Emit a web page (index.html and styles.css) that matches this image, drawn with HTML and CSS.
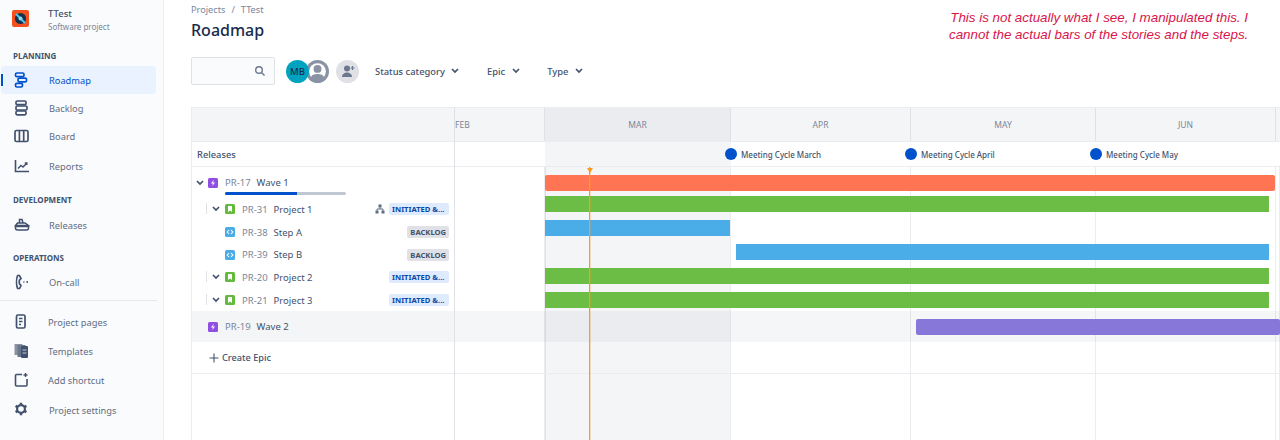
FILE: index.html
```html
<!DOCTYPE html>
<html lang="en">
<head>
<meta charset="utf-8">
<title>Roadmap</title>
<link rel="stylesheet" href="styles.css">
</head>
<body>
<div class="app">
  <aside class="sidebar">
    <div class="project">
      <svg class="avatar" width="17" height="17" viewBox="0 0 17 17"><rect width="17" height="17" rx="2" fill="#f4511e"/><circle cx="8.5" cy="8.5" r="5.6" fill="#17324d"/><path d="M4 4l9 9" stroke="#4fc3e8" stroke-width="2"/><circle cx="8.5" cy="8.5" r="2" fill="#8fd8f0"/></svg>
      <div class="project-text"><div class="project-name">TTest</div><div class="project-type">Software project</div></div>
    </div>
    <div class="nav-head head-planning">PLANNING</div>
    <a class="nav-item active h-28"><span class="marker"></span>
      <svg class="ic" width="16" height="16" viewBox="0 0 16 16" fill="none" stroke="currentColor" stroke-width="1.7"><rect x="1.5" y="1" width="8.5" height="3.6" rx="1.4"/><rect x="4" y="6.2" width="8.5" height="3.6" rx="1.4"/><rect x="1.5" y="11.4" width="7" height="3.6" rx="1.4"/></svg>
      <span>Roadmap</span></a>
    <a class="nav-item h-28">
      <svg class="ic" width="16" height="16" viewBox="0 0 16 16" fill="none" stroke="currentColor" stroke-width="1.7"><rect x="2" y="1" width="10" height="3.6" rx="1.2"/><rect x="2" y="6" width="11" height="4" rx="1.2"/><rect x="2" y="11" width="10" height="3.8" rx="1.2"/></svg>
      <span>Backlog</span></a>
    <a class="nav-item h-28">
      <svg class="ic" width="16" height="16" viewBox="0 0 16 16" fill="none" stroke="currentColor" stroke-width="1.7"><rect x="1" y="2.5" width="13" height="11" rx="1.5"/><path d="M5.4 2.5v11M9.7 2.5v11"/></svg>
      <span>Board</span></a>
    <a class="nav-item h-30 reports">
      <svg class="ic" width="16" height="16" viewBox="0 0 16 16" fill="none" stroke="currentColor" stroke-width="1.6"><path d="M1.5 2v11.5h13.5"/><path d="M4 10.5l3-3 2 1.5 3.5-3.5M10.8 5h2v2" stroke-width="1.5"/></svg>
      <span>Reports</span></a>
    <div class="nav-head head-dev">DEVELOPMENT</div>
    <a class="nav-item h-30">
      <svg class="ic" width="16" height="16" viewBox="0 0 16 16" fill="none" stroke="currentColor" stroke-width="1.5"><path d="M5.5 6V2.5h2.5l1 3.5M3.5 6h7.5l3.5 2.5H1.5z"/><path d="M1.5 9.5h13v1.5a2 2 0 0 1-2 2h-9a2 2 0 0 1-2-2z"/></svg>
      <span>Releases</span></a>
    <div class="nav-head head-ops">OPERATIONS</div>
    <a class="nav-item h-30">
      <svg class="ic" width="16" height="16" viewBox="0 0 16 16" fill="none" stroke="currentColor" stroke-width="1.7"><path d="M5.500 1.500H3.600C2.200 5 2.200 11 3.600 14.500h2L7 11.500 5.400 9.800a9 9 0 0 1 0-3.600L7 4.500z"/><path d="M9.500 8h.8M12.500 8h1.400" stroke-width="2"/></svg>
      <span>On-call</span></a>
    <div class="nav-sep"></div>
    <a class="nav-item h-30 low">
      <svg class="ic" width="16" height="16" viewBox="0 0 16 16" fill="none" stroke="currentColor" stroke-width="1.7"><rect x="2.500" y="1" width="8.500" height="13" rx="1.400"/><path d="M5 4.500h3.500M5 7.500h3.500M5 10.500h2"/></svg>
      <span>Project pages</span></a>
    <a class="nav-item h-28 low">
      <svg class="ic" width="16" height="16" viewBox="0 0 16 16"><rect x="0.500" y="1" width="8" height="11" fill="#8993a4"/><rect x="3.500" y="2" width="8" height="12" fill="#6b778c"/><rect x="7" y="3" width="7" height="12" rx="1" fill="#42526e"/><path d="M8.500 7h4M8.500 10h4" stroke="#c1c7d0"/></svg>
      <span>Templates</span></a>
    <a class="nav-item h-28 low shortcut">
      <svg class="ic" width="16" height="16" viewBox="0 0 16 16" fill="none" stroke="currentColor" stroke-width="1.600"><path d="M8 2.500H2.500a1 1 0 0 0-1 1v9.500a1 1 0 0 0 1 1h9.500a1 1 0 0 0 1-1V7"/><path d="M11.500 1v4M9.500 3h4" stroke-width="1.400"/></svg>
      <span>Add shortcut</span></a>
    <a class="nav-item h-30 low settings">
      <svg class="ic" width="16" height="16" viewBox="0 0 16 16" fill="none" stroke="currentColor"><circle cx="7" cy="7" r="3.900" stroke-width="2.200"/><path d="M7 .8v2M7 11.200v2M1.600 3.900l1.700 1M10.700 9.100l1.700 1M1.600 10.100l1.700-1M10.700 4.900l1.700-1" stroke-width="2.400"/></svg>
      <span>Project settings</span></a>
  </aside>

  <main class="main">
    <div class="crumbs"><span>Projects</span><span class="slash">/</span><span>TTest</span></div>
    <h1 class="title">Roadmap</h1>
    <p class="note">This is not actually what I see, I manipulated this. I<br>cannot the actual bars of the stories and the steps.</p>

    <div class="toolbar">
      <div class="search"><svg width="12" height="12" viewBox="0 0 12 12" fill="none" stroke="#6b778c" stroke-width="1.400"><circle cx="5" cy="5" r="3.300"/><path d="M7.500 7.500l3 3"/></svg></div>
      <div class="people">
        <span class="person mb">MB</span>
        <span class="person ghost"><svg width="23" height="23" viewBox="0 0 22 22"><circle cx="11" cy="11" r="11" fill="#8993a4"/><circle cx="11" cy="11" r="8" fill="#fff"/><circle cx="11" cy="8.500" r="3.800" fill="#8993a4"/><path d="M5 16.500c0-4 12-4 12 0v3H5z" fill="#8993a4"/></svg></span>
        <span class="person add"><svg width="14" height="14" viewBox="0 0 14 14" fill="#6b778c"><circle cx="6" cy="4.500" r="3"/><path d="M1 13c0-6 10-6 10 0z"/><path d="M11.500 2v4M9.500 4h4" stroke="#6b778c" stroke-width="1.200"/></svg></span>
      </div>
      <button class="filter f-status">Status category<svg class="chev" width="8" height="6" viewBox="0 0 8 6"><path d="M1 1l3 3 3-3" fill="none" stroke="#42526e" stroke-width="1.700"/></svg></button>
      <button class="filter f-epic">Epic<svg class="chev" width="8" height="6" viewBox="0 0 8 6"><path d="M1 1l3 3 3-3" fill="none" stroke="#42526e" stroke-width="1.700"/></svg></button>
      <button class="filter f-type">Type<svg class="chev" width="8" height="6" viewBox="0 0 8 6"><path d="M1 1l3 3 3-3" fill="none" stroke="#42526e" stroke-width="1.700"/></svg></button>
    </div>

    <section class="timeline">
      <div class="left">
        <div class="left-head"></div>
        <div class="left-releases">Releases</div>
        <div class="row epic-open">
          <svg class="tw" width="8" height="6" viewBox="0 0 8 6"><path d="M1 1l3 3 3-3" fill="none" stroke="#42526e" stroke-width="1.700"/></svg>
          <svg class="type" width="10" height="10" viewBox="0 0 10 10"><rect width="10" height="10" rx="1.500" fill="#904ee2"/><path d="M5.700 1.800L3 5.500h2l-.7 2.700L7 4.500H5z" fill="#fff"/></svg>
          <span class="key">PR-17</span><span class="name">Wave 1</span>
          <div class="progress"><div class="progress-done"></div></div>
        </div>
        <div class="row child first">
          <span class="tick"></span><svg class="tw" width="8" height="6" viewBox="0 0 8 6"><path d="M1 1l3 3 3-3" fill="none" stroke="#42526e" stroke-width="1.700"/></svg>
          <svg class="type" width="10" height="10" viewBox="0 0 10 10"><rect width="10" height="10" rx="1.500" fill="#63ba3c"/><path d="M3 2h4v6L5 6.500 3 8z" fill="#fff"/></svg>
          <span class="key">PR-31</span><span class="name">Project 1</span>
          <svg class="tree" width="10" height="10" viewBox="0 0 10 10" fill="#5e6c84"><rect x="3.500" y="0.500" width="3" height="3"/><rect x="0.500" y="6.500" width="3" height="3"/><rect x="6.500" y="6.500" width="3" height="3"/><path d="M5 3.500V5M2 6.500V5h6v1.500" fill="none" stroke="#5e6c84"/></svg>
          <span class="lozenge blue">INITIATED &amp;...</span>
        </div>
        <div class="row leaf">
          <svg class="type" width="10" height="10" viewBox="0 0 10 10"><rect width="10" height="10" rx="1.500" fill="#4bade8"/><path d="M4 3L2.200 5 4 7M6 3l1.800 2L6 7" fill="none" stroke="#fff" stroke-width="1.100"/></svg>
          <span class="key">PR-38</span><span class="name">Step A</span>
          <span class="lozenge grey">BACKLOG</span>
        </div>
        <div class="row leaf">
          <svg class="type" width="10" height="10" viewBox="0 0 10 10"><rect width="10" height="10" rx="1.500" fill="#4bade8"/><path d="M4 3L2.200 5 4 7M6 3l1.800 2L6 7" fill="none" stroke="#fff" stroke-width="1.100"/></svg>
          <span class="key">PR-39</span><span class="name">Step B</span>
          <span class="lozenge grey">BACKLOG</span>
        </div>
        <div class="row child">
          <span class="tick"></span><svg class="tw" width="8" height="6" viewBox="0 0 8 6"><path d="M1 1l3 3 3-3" fill="none" stroke="#42526e" stroke-width="1.700"/></svg>
          <svg class="type" width="10" height="10" viewBox="0 0 10 10"><rect width="10" height="10" rx="1.500" fill="#63ba3c"/><path d="M3 2h4v6L5 6.500 3 8z" fill="#fff"/></svg>
          <span class="key">PR-20</span><span class="name">Project 2</span>
          <span class="lozenge blue">INITIATED &amp;...</span>
        </div>
        <div class="row child">
          <span class="tick"></span><svg class="tw" width="8" height="6" viewBox="0 0 8 6"><path d="M1 1l3 3 3-3" fill="none" stroke="#42526e" stroke-width="1.700"/></svg>
          <svg class="type" width="10" height="10" viewBox="0 0 10 10"><rect width="10" height="10" rx="1.500" fill="#63ba3c"/><path d="M3 2h4v6L5 6.500 3 8z" fill="#fff"/></svg>
          <span class="key">PR-21</span><span class="name">Project 3</span>
          <span class="lozenge blue">INITIATED &amp;...</span>
        </div>
        <div class="row epic-closed">
          <svg class="type" width="10" height="10" viewBox="0 0 10 10"><rect width="10" height="10" rx="1.500" fill="#904ee2"/><path d="M5.700 1.800L3 5.500h2l-.7 2.700L7 4.500H5z" fill="#fff"/></svg>
          <span class="key">PR-19</span><span class="name">Wave 2</span>
        </div>
        <div class="row create"><svg width="10" height="10" viewBox="0 0 10 10"><path d="M5 .5v9M.5 5h9" stroke="#42526e" stroke-width="1.100"/></svg><span>Create Epic</span></div>
      </div>

      <div class="chart">
        <div class="months">
          <div class="month w-feb feb">FEB</div>
          <div class="month w-mar current">MAR</div>
          <div class="month w-apr">APR</div>
          <div class="month w-may">MAY</div>
          <div class="month w-jun">JUN</div>
          <div class="month w-rest"></div>
        </div>
        <div class="releases">
          <div class="rel w-rel1"></div>
          <div class="rel w-rel2"><i class="dot"></i>Meeting Cycle March</div>
          <div class="rel w-rel3"><i class="dot"></i>Meeting Cycle April</div>
          <div class="rel w-rel4"><i class="dot"></i>Meeting Cycle May</div>
        </div>
        <div class="canvas">
          <div class="columns">
            <div class="col w-feb"></div><div class="col w-mar tint"></div><div class="col w-apr"></div><div class="col w-may"></div><div class="col w-jun"></div><div class="col w-rest"></div>
          </div>
          <div class="today"></div>
          <div class="bars">
            <div class="band b-first"><div class="bar orange" style="margin-left:90px;width:730px"></div></div>
            <div class="band"><div class="bar green" style="margin-left:90px;width:724px"></div></div>
            <div class="band"><div class="bar sky" style="margin-left:90px;width:185px"></div></div>
            <div class="band"><div class="bar sky" style="margin-left:281px;width:533px"></div></div>
            <div class="band"><div class="bar green" style="margin-left:90px;width:724px"></div></div>
            <div class="band"><div class="bar green" style="margin-left:90px;width:724px"></div></div>
            <div class="band grey-band"><div class="bar purple" style="margin-left:461px;width:364px"></div></div>
            <div class="band last-band"></div>
          </div>
        </div>
      </div>
    </section>
  </main>
</div>
</body>
</html>
```

FILE: styles.css
```css
* { box-sizing: border-box; }
html, body { margin: 0; padding: 0; }
body { width: 1280px; height: 440px; overflow: hidden; background: #fff; font-family: "Noto Sans", sans-serif; color: #172b4d; }
.app { display: flex; height: 440px; }

.sidebar { width: 164px; flex: none; background: #fafbfc; border-right: 1px solid #ebecf0; padding-top: 9px; color: #42526e; }
.project { display: flex; padding-left: 12px; height: 25px; }
.avatar { margin-top: 1px; }
.project-text { margin-left: 19px; }
.project-name { font-size: 9.5px; line-height: 13px; font-weight: 500; color: #42526e; margin-top: -2px; }
.project-type { font-size: 8px; line-height: 12px; color: #7a869a; margin-top: 1px; }
.nav-head { font-size: 8px; line-height: 12px; font-weight: 700; color: #42526e; padding-left: 13px; }
.head-planning { margin-top: 16px; margin-bottom: 4px; }
.head-dev { margin-top: 13px; margin-bottom: 4px; }
.head-ops { margin-top: 12px; margin-bottom: 3px; }
.nav-item { position: relative; display: flex; align-items: center; margin-left: 1px; width: 155px; padding-left: 13px; font-size: 9.3px; color: #5e6c84; border-radius: 3px; }
.nav-item .ic { flex: none; color: #42526e; margin-right: 19px; }
.h-28 { height: 28px; }
.h-30 { height: 30px; }
.reports { margin-top: 1px; }
.active { background: #e9f2fe; color: #0052cc; }
.active .ic { color: #0052cc; }
.marker { position: absolute; left: 0; top: 8px; width: 2px; height: 12px; background: #0052cc; }
.nav-sep { height: 1px; background: #e6e8ec; width: 157px; margin-top: 3px; margin-bottom: 6px; }
.low .ic { margin-right: 18px; }
.shortcut { margin-top: 1px; }
.settings { margin-top: 1px; }
.settings .ic { margin-right: 19px; }

.main { flex: 1; min-width: 0; padding-left: 27px; position: relative; }
.crumbs { display: flex; gap: 6px; font-size: 9.2px; line-height: 13px; color: #7a869a; margin-top: 3px; }
.slash { color: #7a869a; }
.title { margin: 2px 0 0; font-size: 16px; line-height: 24px; font-weight: 500; color: #172b4d; }
.note { position: absolute; left: 785px; top: 10px; margin: 0; font: italic 13.36px/16.5px "Liberation Sans", sans-serif; color: #d9144a; text-align: right; width: 299px; white-space: nowrap; }

.toolbar { display: flex; align-items: center; height: 30px; margin-top: 14px; }
.search { width: 84px; height: 28px; background: #fafbfc; border: 1px solid #dfe1e6; border-radius: 2px; display: flex; align-items: center; justify-content: flex-end; padding-right: 8px; }
.people { display: flex; margin-left: 11px; align-items: center; }
.person { width: 23px; height: 23px; border-radius: 50%; display: flex; align-items: center; justify-content: center; flex: none; }
.mb { background: #00a3bf; color: #172b4d; font-size: 9.5px; font-weight: 500; z-index: 1; }
.ghost { margin-left: -3px; }
.add { background: #dfe1e6; margin-left: 7px; }
.filter { display: flex; align-items: center; border: 0; background: none; padding: 0; font: 500 9.4px "Noto Sans", sans-serif; color: #42526e; }
.chev { margin-left: 6px; }
.f-status { margin-left: 16px; }
.f-epic { margin-left: 28px; }
.f-epic .chev { margin-left: 7px; }
.f-type { margin-left: 27px; }
.f-type .chev { margin-left: 7px; }

.timeline { display: flex; margin-top: 21px; height: 333px; width: 1089px; overflow: hidden; }
.left { width: 264px; flex: none; border-left: 1px solid #ebecf0; border-right: 1px solid #dfe1e6; display: flex; flex-direction: column; }
.left-head { height: 35px; flex: none; background: #f4f5f7; border-top: 1px solid #ebecf0; border-bottom: 1px solid #ebecf0; }
.left-releases { height: 25px; flex: none; font-size: 9.3px; font-weight: 500; color: #42526e; padding-left: 5px; display: flex; align-items: center; border-bottom: 1px solid #ebecf0; }
.row { position: relative; display: flex; align-items: center; font-size: 9.5px; color: #42526e; flex: none; height: 22.7px; padding-right: 5px; }
.key { color: #7a869a; margin-right: 6px; }
.name { color: #42526e; }
.type { flex: none; margin-right: 7px; }
.tw { flex: none; }
.epic-open { height: 31px; padding-left: 4px; }
.epic-open .tw { margin-right: 4px; }
.progress { position: absolute; left: 33px; top: 25px; width: 121px; height: 3px; background: #c1c7d0; border-radius: 2px; overflow: hidden; }
.progress-done { width: 72px; height: 3px; background: #0052cc; }
.child { padding-left: 20px; }
.child .tw { margin-right: 5px; }
.tick { position: absolute; left: 14px; top: 5px; width: 1px; height: 11px; background: #dfe1e6; }
.leaf { padding-left: 33px; }
.tree { margin-left: auto; margin-right: 4px; }
.lozenge { font-size: 7.6px; font-weight: 700; line-height: 12px; border-radius: 2px; padding: 0 3px; }
.blue { background: #deebff; color: #0747a6; width: 60px; white-space: nowrap; }
.child:not(.first) .blue, .grey { margin-left: auto; }
.grey { background: #dfe1e6; color: #42526e; }
.epic-closed { height: 31px; padding-left: 16px; background: #f4f5f7; }
.create { height: 32px; padding-left: 17px; gap: 3px; border-bottom: 1px solid #ebecf0; font-size: 9.2px; font-weight: 500; }

.chart { flex: 1; min-width: 0; }
.months { display: flex; height: 35px; background: #f4f5f7; border-top: 1px solid #ebecf0; border-bottom: 1px solid #ebecf0; }
.month { font-size: 8.5px; color: #7a869a; display: flex; align-items: center; justify-content: center; border-right: 1px solid #dfe1e6; flex: none; }
.feb { justify-content: flex-start; }
.current { background: #ebecf0; }
.w-feb { width: 90px; }
.w-mar { width: 186px; }
.w-apr { width: 180px; }
.w-may { width: 185px; }
.w-jun { width: 180px; }
.w-rest { width: 4px; border-right: 0; }
.releases { display: flex; height: 25px; border-bottom: 1px solid #ebecf0; background: linear-gradient(#f4f5f7, #f4f5f7) 90px 0 / 186px 100% no-repeat; }
.rel { display: flex; align-items: center; font-size: 8px; font-weight: 500; color: #42526e; flex: none; white-space: nowrap; }
.w-rel1 { width: 270px; }
.w-rel2 { width: 180px; }
.w-rel3 { width: 185px; }
.w-rel4 { width: 185px; }
.dot { width: 12px; height: 12px; border-radius: 50%; background: #0052cc; margin-right: 4px; flex: none; }

.canvas { position: relative; height: 273px; }
.columns { position: absolute; inset: 0; display: flex; }
.col { border-right: 1px solid #ebecf0; flex: none; height: 100%; }
.tint { background: #f4f5f7; border-left: 1px solid #dfe1e6; }
.today { position: absolute; left: 134px; top: 0; bottom: 0; width: 1px; background: #ff991f; box-shadow: 1px 0 0 rgba(255, 153, 31, .3); z-index: 2; }
.today::before { content: ""; position: absolute; left: -2px; top: 1px; border: 3px solid transparent; border-top: 5px solid #ff991f; border-bottom: 0; }
.bars { position: relative; }
.band { height: 24px; display: flex; align-items: center; }
.b-first { height: 28px; align-items: flex-start; padding-top: 8px; }
.bar { height: 16px; flex: none; border-radius: 2px; }
.band:nth-child(2) { margin-top: -3px; }
.orange { background: #ff7452; }
.green { background: #6cbd46; border-radius: 0; }
.sky { background: #4bade8; border-radius: 0; }
.purple { background: #8777d9; }
.grey-band { height: 31px; background: rgba(9, 30, 66, .04); margin-top: -1px; }
.last-band { height: 32px; border-bottom: 1px solid #ebecf0; }
```
